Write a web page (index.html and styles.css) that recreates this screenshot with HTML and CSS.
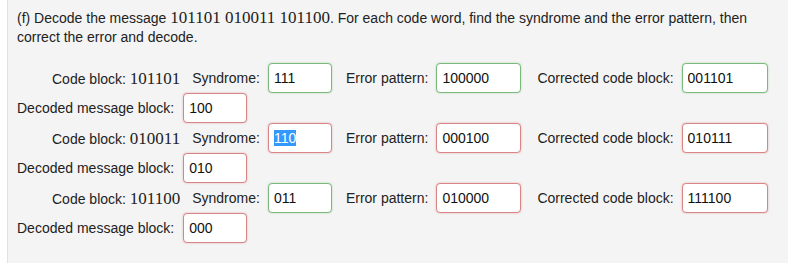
FILE: index.html
```html
<!DOCTYPE html>
<html>
<head>
<meta charset="utf-8">
<link rel="stylesheet" href="styles.css">
</head>
<body>
<div class="panel">
  <p class="prompt">(f) Decode the message <span class="math">101101 010011 101100</span>. For each code word, find the syndrome and the error pattern, then correct the error and decode.</p>
  <div class="answers">
    <div class="row row-code">
      <span class="label">Code block: <span class="math">101101</span></span>
      <span class="field"><span class="label">Syndrome:</span><input class="box narrow ok" value="111"></span>
      <span class="field"><span class="label">Error pattern:</span><input class="box wide ok" value="100000"></span>
      <span class="field last"><span class="label">Corrected code block:</span><input class="box wider ok" value="001101"></span>
    </div>
    <div class="row">
      <span class="field"><span class="label">Decoded message block:</span><input class="box narrow bad" value="100"></span>
    </div>
    <div class="row row-code">
      <span class="label">Code block: <span class="math">010011</span></span>
      <span class="field"><span class="label">Syndrome:</span><input id="sel" class="box narrow bad" value="110"></span>
      <span class="field"><span class="label">Error pattern:</span><input class="box wide bad" value="000100"></span>
      <span class="field last"><span class="label">Corrected code block:</span><input class="box wider bad" value="010111"></span>
    </div>
    <div class="row">
      <span class="field"><span class="label">Decoded message block:</span><input class="box narrow bad" value="010"></span>
    </div>
    <div class="row row-code">
      <span class="label">Code block: <span class="math">101100</span></span>
      <span class="field"><span class="label">Syndrome:</span><input class="box narrow ok" value="011"></span>
      <span class="field"><span class="label">Error pattern:</span><input class="box wide bad" value="010000"></span>
      <span class="field last"><span class="label">Corrected code block:</span><input class="box wider bad" value="111100"></span>
    </div>
    <div class="row">
      <span class="field"><span class="label">Decoded message block:</span><input class="box narrow bad" value="000"></span>
    </div>
  </div>
</div>
<script src="script.js"></script>
</body>
</html>
```
FILE: styles.css
```css
html, body {
  margin: 0;
  padding: 0;
  background: #ffffff;
}
body {
  font-family: "Liberation Sans", Arial, sans-serif;
  font-size: 14px;
  color: #222;
}
.panel {
  margin-left: 7px;
  border-left: 1px solid #e2e2e2;
  background: #f4f4f4;
  min-height: 263px;
  box-sizing: border-box;
  padding: 9px 10px 0 9px;
}
.prompt {
  margin: 0;
  line-height: 19px;
}
.math {
  font-family: "Liberation Serif", "Times New Roman", serif;
  font-size: 17px;
  line-height: 1;
}
.answers {
  margin-top: 16px;
  display: flex;
  flex-direction: column;
}
.row {
  display: flex;
  align-items: center;
  height: 30px;
  gap: 12px;
}
.row-code {
  padding-left: 35px;
  gap: 12px;
}
.field {
  display: flex;
  align-items: center;
  gap: 9px;
}
.row-code .field {
  gap: 8px;
}
.row-code .field + .field {
  margin-left: 2px;
}
.row-code .field.last {
  margin-left: 4px;
}
.box {
  box-sizing: border-box;
  height: 30px;
  margin: 0;
  padding: 0 5px;
  border-radius: 4px;
  background: #fff;
  font-family: "Liberation Sans", Arial, sans-serif;
  font-size: 14px;
  color: #111;
  outline: none;
}
.narrow { width: 64px; }
.wide { width: 85px; }
.wider { width: 86px; }
.ok {
  border: 1px solid #7cb97c;
  box-shadow: 0 0 2px rgba(92, 170, 92, 0.45);
}
.bad {
  border: 1px solid #d98585;
  box-shadow: 0 0 2px rgba(210, 100, 100, 0.5);
}
.box:focus {
  outline: none;
}
.box::selection {
  background: #3399ff;
  color: #fff;
}
```
FILE: script.js
```js
var el = document.getElementById('sel');
el.focus();
el.setSelectionRange(0, el.value.length);
```
